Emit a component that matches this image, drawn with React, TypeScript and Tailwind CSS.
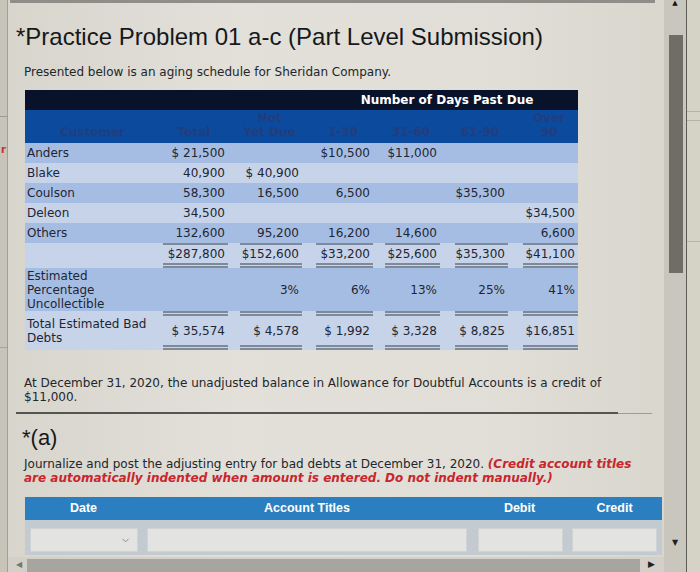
import { ChevronDown } from "lucide-react";

const cols = "grid grid-cols-[135px_68px_74px_71px_67px_68px_70px]";
const pads = ["ml-[3px]", "ml-[12px]", "ml-[14px]", "ml-[12px]", "ml-[15px]", "ml-[15px]"];
const MID = "bg-[#a6bde3]";
const LIGHT = "bg-[#c6d3e9]";
const LINE = "border-[#7e8a9a]";

const rows = [
  { name: "Anders", v: ["$ 21,500", "", "$10,500", "$11,000", "", ""] },
  { name: "Blake", v: ["40,900", "$ 40,900", "", "", "", ""] },
  { name: "Coulson", v: ["58,300", "16,500", "6,500", "", "$35,300", ""] },
  { name: "Deleon", v: ["34,500", "", "", "", "", "$34,500"] },
  { name: "Others", v: ["132,600", "95,200", "16,200", "14,600", "", "6,600"] },
];
const totals = ["$287,800", "$152,600", "$33,200", "$25,600", "$35,300", "$41,100"];
const pct = ["", "3%", "6%", "13%", "25%", "41%"];
const bad = ["$ 35,574", "$ 4,578", "$ 1,992", "$ 3,328", "$ 8,825", "$16,851"];
const heads = [["Total"], ["Not", "Yet Due"], ["1-30"], ["31-60"], ["61-90"], ["Over", "90"]];

const DoubleLine = () => (
  <div className={`${cols} h-[5px] ${LIGHT}`}>
    <div />
    {pads.map((p, j) => (
      <div key={j} className={`${p} border-y-2 ${LINE}`} />
    ))}
  </div>
);

const AgingTable = () => (
  <div className="ml-[17px] w-[553px] text-[12px] text-[#1e2633]">
    <div className={`${cols} h-[20px] bg-[#08132b] items-center`}>
      <div className="col-start-4 col-span-4 pl-[14px] text-center font-bold text-white">
        Number of Days Past Due
      </div>
    </div>
    <div className={`${cols} h-[33px] bg-[#0c4a9d] items-end pb-[4px] font-bold leading-[14px] text-[#203e7e]`}>
      <div className="text-center">Customer</div>
      {heads.map((h, j) => (
        <div key={j} className={`${pads[j]} pr-[3px] text-center`}>
          {h.map((t) => (
            <div key={t}>{t}</div>
          ))}
        </div>
      ))}
    </div>
    {rows.map((r, i) => (
      <div key={r.name} className={`${cols} h-[20px] items-center ${i % 2 === 0 ? MID : LIGHT}`}>
        <div className="pl-[2px]">{r.name}</div>
        {r.v.map((v, j) => (
          <div key={j} className={`${pads[j]} pr-[3px] text-right`}>
            {v}
          </div>
        ))}
      </div>
    ))}
    <div className={`${cols} h-[20px] ${LIGHT}`}>
      <div />
      {totals.map((v, j) => (
        <div key={j} className={`${pads[j]} pr-[3px] border-t-2 ${LINE} flex items-center justify-end`}>
          {v}
        </div>
      ))}
    </div>
    <DoubleLine />
    <div className={`${cols} h-[43px] items-center ${MID}`}>
      <div className="pl-[2px] leading-[14px]">
        Estimated
        <br />
        Percentage
        <br />
        Uncollectible
      </div>
      {pct.map((v, j) => (
        <div key={j} className={`${pads[j]} pr-[3px] text-right`}>
          {v}
        </div>
      ))}
    </div>
    <DoubleLine />
    <div className={`${cols} h-[29px] items-center ${LIGHT}`}>
      <div className="pl-[2px] leading-[14px]">
        Total Estimated Bad
        <br />
        Debts
      </div>
      {bad.map((v, j) => (
        <div key={j} className={`${pads[j]} pr-[3px] text-right`}>
          {v}
        </div>
      ))}
    </div>
    <DoubleLine />
  </div>
);

const JournalTable = () => (
  <div className="ml-[17px] w-[637px]">
    <div className="grid grid-cols-[117px_330px_95px_95px] h-[23px] items-center bg-[#2b7fc0] text-[12.5px] font-bold text-white font-['Liberation_Sans',Arial,sans-serif]">
      <div className="text-center">Date</div>
      <div className="text-center">Account Titles</div>
      <div className="text-center">Debit</div>
      <div className="text-center">Credit</div>
    </div>
    <div className="grid grid-cols-[117px_330px_95px_95px] h-[35px] bg-[#c3cbd0] pt-[8px] pb-[3px]">
      <div className="pl-[5px] pr-[4px]">
        <div className="h-full bg-[#e3e4e1] border border-[#d0d3d3] flex items-center justify-end pr-[6px]">
          <ChevronDown size={11} strokeWidth={2} className="text-[#7d838c]" />
        </div>
      </div>
      <div className="px-[5px]">
        <div className="h-full bg-[#e3e4e1] border border-[#d0d3d3]" />
      </div>
      <div className="pl-[6px] pr-[4px]">
        <div className="h-full bg-[#e3e4e1] border border-[#d0d3d3]" />
      </div>
      <div className="pl-[5px] pr-[5px]">
        <div className="h-full bg-[#e3e4e1] border border-[#d0d3d3]" />
      </div>
    </div>
  </div>
);

export default function App() {
  return (
    <div className="w-[700px] h-[572px] overflow-hidden flex bg-[#dcdad2] font-['DejaVu_Sans',Verdana,sans-serif]">
      {/* left edge of the neighbouring pane */}
      <div className="w-[8px] shrink-0 flex flex-col bg-[#c7c4b9] border-r border-[#a29f96] overflow-hidden">
        <div className="mt-[116px] h-[1px] bg-[#9c998f]" />
        <div className="mt-[26px] ml-[1px] text-[10px] font-bold leading-[14px] text-[#c8322e]">r</div>
        <div className="mt-[190px] h-[1px] bg-[#a7a49b]" />
      </div>

      {/* main content */}
      <div className="w-[656px] shrink-0 flex flex-col bg-[linear-gradient(90deg,#d7d5cc,#e2e0d9_35%,#e0ded6_75%,#d8d6cd)]">
        <div className="ml-[2px] w-[645px] h-[3px] bg-[#8e8d88]" />
        <h1 className="ml-[8px] mt-[20px] text-[24px] leading-[28px] text-[#16181c] font-['Liberation_Sans',Arial,sans-serif]">
          *Practice Problem 01 a-c (Part Level Submission)
        </h1>
        <p className="ml-[16px] mt-[14px] text-[12px] leading-[14px] text-[#23262b]">
          Presented below is an aging schedule for Sheridan Company.
        </p>
        <div className="mt-[11px]">
          <AgingTable />
        </div>
        <p className="ml-[16px] mt-[26px] text-[12px] leading-[14px] text-[#23262b] whitespace-nowrap">
          At December 31, 2020, the unadjusted balance in Allowance for Doubtful Accounts is a credit of
          <br />
          $11,000.
        </p>
        <div className="ml-[8px] mt-[8px] flex items-center">
          <div className="w-[602px] h-[2px] bg-[#55554f]" />
          <div className="w-[34px] h-[1px] bg-[#9d9c96]" />
        </div>
        <div className="ml-[14px] mt-[10px] text-[22px] leading-[28px] text-[#16181c] font-['Liberation_Sans',Arial,sans-serif]">
          *(a)
        </div>
        <p className="ml-[16px] mt-[5px] text-[12px] leading-[14px] text-[#23262b] whitespace-nowrap">
          Journalize and post the adjusting entry for bad debts at December 31, 2020.{" "}
          <span className="font-bold italic text-[#c9262c]">
            (Credit account titles
            <br />
            are automatically indented when amount is entered. Do not indent manually.)
          </span>
        </p>
        <div className="mt-[12px]">
          <JournalTable />
        </div>

        {/* horizontal scrollbar */}
        <div className="mt-auto h-[15px] flex items-center bg-[#d2d0c8]">
          <span className="ml-[4px] w-[14px] text-[8px] text-[#77766f] text-center">◀</span>
          <div className="ml-[1px] w-[613px] h-[13px] mt-[2px] bg-[#a6a59f]" />
          <span className="ml-[8px] text-[9px] text-[#222]">▶</span>
        </div>
      </div>

      {/* vertical scrollbar */}
      <div className="w-[22px] shrink-0 flex flex-col items-center bg-[#c9c7bd]">
        <span className="mt-[-1px] text-[7px] leading-[8px] text-[#111]">▲</span>
        <div className="mt-[28px] ml-[1px] w-[14px] h-[238px] bg-[#6f6d66]" />
        <span className="mt-[266px] text-[8px] leading-[8px] text-[#222]">▼</span>
      </div>

      {/* neighbouring pane on the right */}
      <div className="flex-1 flex flex-col bg-[#d5d2c6] border-l border-[#5e5c56]">
        <div className="mt-[111px] h-[1px] bg-[#b5b2a7]" />
        <div className="mt-[8px] h-[1px] bg-[#b5b2a7]" />
        <div className="mt-[120px] h-[1px] bg-[#b9b6ab]" />
      </div>
    </div>
  );
}
